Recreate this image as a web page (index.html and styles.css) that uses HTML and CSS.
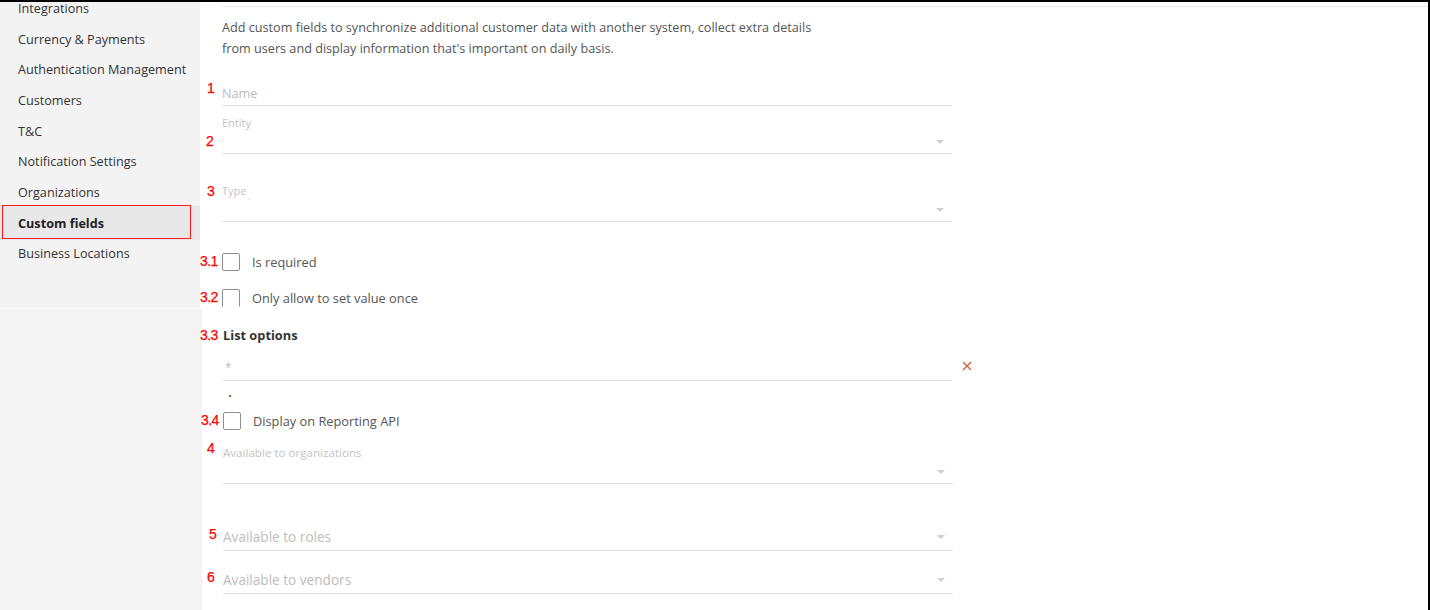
FILE: index.html
```html
<!DOCTYPE html>
<html lang="en">
<head>
<meta charset="utf-8">
<title>Custom fields</title>
<link rel="stylesheet" href="styles.css">
</head>
<body>
<div class="frame">
  <aside class="sidebar">
    <div class="side-top">
      <ul class="nav">
        <li class="nav-item">Integrations</li>
        <li class="nav-item">Currency &amp; Payments</li>
        <li class="nav-item">Authentication Management</li>
        <li class="nav-item">Customers</li>
        <li class="nav-item">T&amp;C</li>
        <li class="nav-item">Notification Settings</li>
        <li class="nav-item">Organizations</li>
        <li class="nav-item active">Custom fields</li>
        <li class="nav-item">Business Locations</li>
      </ul>
    </div>
    <div class="side-bottom"></div>
  </aside>

  <main class="main">
    <div class="rule"></div>
    <p class="desc">Add custom fields to synchronize additional customer data with another system, collect extra details<br>from users and display information that's important on daily basis.</p>

    <div class="field text-field name-field">
      <span class="num n1">1</span>
      <span class="placeholder">Name</span>
    </div>

    <div class="field select-field entity-field">
      <span class="num n2">2</span>
      <span class="label">Entity</span>
      <div class="value"><span class="tick"></span><span class="caret"></span></div>
    </div>

    <div class="field select-field type-field">
      <span class="num n3">3</span>
      <span class="label">Type</span>
      <div class="value"><span class="tick tick-type"></span><span class="caret"></span></div>
    </div>

    <label class="check-row req-row">
      <span class="num nsub">3.1</span>
      <span class="box"></span>
      <span class="check-label">Is required</span>
    </label>

    <label class="check-row once-row">
      <span class="num nsub">3.2</span>
      <span class="box box-cut"></span>
      <span class="check-label">Only allow to set value once</span>
    </label>

    <div class="lower">
      <h3 class="heading"><span class="num nsub nhead">3.3</span>List options</h3>

      <div class="option-row">
        <div class="field text-field option-field">
          <span class="placeholder star">*</span>
        </div>
        <svg class="remove" width="10" height="10" viewBox="0 0 10 10" aria-hidden="true">
          <path d="M1 1 L9 9 M9 1 L1 9" stroke="#c8643f" stroke-width="1.4" fill="none"/>
        </svg>
      </div>
      <div class="err"><span class="err-dot"></span></div>

      <label class="check-row api-row">
        <span class="num nsub">3.4</span>
        <span class="box"></span>
        <span class="check-label">Display on Reporting API</span>
      </label>

      <div class="field select-field orgs-field">
        <span class="num n4">4</span>
        <span class="label label-wide">Available to organizations</span>
        <div class="value"><span class="caret"></span></div>
      </div>

      <div class="field text-field drop roles-field">
        <span class="num n5">5</span>
        <span class="placeholder">Available to roles</span>
        <span class="caret"></span>
      </div>

      <div class="field text-field drop vendors-field">
        <span class="num n6">6</span>
        <span class="placeholder">Available to vendors</span>
        <span class="caret"></span>
      </div>
    </div>
  </main>
</div>
</body>
</html>
```

FILE: styles.css
```css
* { box-sizing: border-box; }

html, body {
  margin: 0;
  padding: 0;
  background: #ffffff;
}

body {
  font-family: "Open Sans", "Liberation Sans", sans-serif;
  font-size: 12.7px;
  color: #333;
}

.frame {
  display: flex;
  height: 610px;
  border-top: 2px solid #000;
  border-right: 2px solid #000;
  overflow: hidden;
}

/* ---------- sidebar ---------- */
.sidebar {
  width: 202px;
  flex: 0 0 202px;
  display: flex;
  flex-direction: column;
}

.side-top {
  width: 200px;
  height: 306px;
  background: #f3f3f3;
}

.side-bottom {
  flex: 1;
  width: 202px;
  background: #f4f4f4;
  border-top: 1px solid #ffffff;
}

.nav {
  list-style: none;
  margin: -9.2px 0 0 0;
  padding: 0;
}

.nav-item {
  position: relative;
  height: 30.7px;
  line-height: 30.7px;
  padding-left: 18px;
  font-size: 12.65px;
  color: #333;
  white-space: nowrap;
}

.nav-item.active {
  font-weight: 700;
  color: #222;
  z-index: 0;
}

.nav-item.active::before {
  content: "";
  position: absolute;
  left: 0;
  right: 0;
  top: -1.6px;
  bottom: -1.8px;
  background: #e8e8e8;
  z-index: -1;
}

.nav-item.active::after {
  content: "";
  position: absolute;
  left: 2px;
  right: 9px;
  top: -2.6px;
  bottom: -0.6px;
  border: 1.5px solid #ff1a1a;
}

/* ---------- main ---------- */
.main {
  flex: 1;
  padding-left: 20px;
  min-width: 0;
}

.rule {
  margin-top: 4px;
  border-top: 1px solid #ececec;
}

.desc {
  margin: 9.5px 0 0 0;
  font-size: 12.65px;
  line-height: 21px;
  color: #555;
}

.field {
  position: relative;
  width: 730px;
  border-bottom: 1px solid #e2e2e2;
}

.num {
  position: absolute;
  font-family: "Liberation Sans", Arial, sans-serif;
  font-size: 14px;
  line-height: 15px;
  letter-spacing: -0.6px;
  color: #ff0000;
  font-weight: 400;
  -webkit-text-stroke: 0.25px #ff0000;
}

.n1 { left: -15px; top: -2px; }
.n2 { left: -16px; top: 28px; }
.n3 { left: -15px; top: 10px; }
.n4 { left: -16px; top: 10.5px; }
.n5 { left: -14px; top: 0px; }
.n6 { left: -16px; top: 0px; }
.nsub { left: -22px; top: 0.5px; }
.nhead { left: -23px; top: 1.5px; }

.placeholder {
  display: block;
  line-height: 20px;
  color: #bdbdbd;
}

.text-field { padding-bottom: 2px; }

.name-field { margin-top: 24.5px; }

.select-field { padding-top: 10px; }

.label {
  display: block;
  font-size: 11px;
  line-height: 14px;
  color: #c4c4c4;
}

.label-wide { font-size: 11.6px; }

.value {
  position: relative;
  height: 23px;
}

.caret {
  position: absolute;
  right: 8px;
  top: 50%;
  margin-top: -2px;
  width: 0;
  height: 0;
  border-left: 4px solid transparent;
  border-right: 4px solid transparent;
  border-top: 4px solid #cfcfcf;
}

.tick {
  position: absolute;
  left: 0;
  top: 9px;
  width: 1px;
  height: 3px;
  background: #e6e6e6;
}

.tick-type {
  left: 26px;
  top: 1px;
  width: 2px;
  height: 1px;
}

.type-field { margin-top: 20px; }

/* ---------- checkboxes ---------- */
.check-row {
  position: relative;
  display: flex;
  align-items: center;
  height: 18px;
}

.box {
  width: 18px;
  height: 18px;
  border: 1px solid #8f8f8f;
  border-radius: 2px;
  background: #fff;
}

.box-cut {
  border-bottom-color: transparent;
  border-bottom-left-radius: 0;
  border-bottom-right-radius: 0;
}

.check-label {
  margin-left: 12px;
  font-size: 12.8px;
  line-height: 18px;
  color: #555;
}

.req-row { margin-top: 31px; }
.once-row { margin-top: 18px; }

/* ---------- lower section ---------- */
.lower { padding-left: 1px; }

.heading {
  position: relative;
  margin: 19px 0 0 0;
  font-size: 12.8px;
  font-weight: 700;
  line-height: 18px;
  color: #333;
}

.option-row {
  display: flex;
  align-items: flex-start;
  margin-top: 14px;
}

.option-field { width: 729px; }

.star {
  padding-left: 2px;
  font-size: 12px;
  color: #bbbbbb;
}

.remove {
  margin-left: 10px;
  margin-top: 3px;
  flex: none;
}

.err {
  height: 2px;
  margin-top: 14px;
}

.err-dot {
  display: block;
  width: 2px;
  height: 2px;
  margin-left: 6px;
  background: #b3502c;
}

.api-row { margin-top: 15px; }

.orgs-field { padding-top: 16px; }

.drop { padding-bottom: 3px; }

.drop .placeholder { font-size: 13.6px; }

.drop .caret { right: 8px; top: 10px; }

.roles-field { margin-top: 43px; }
.vendors-field { margin-top: 19px; }
```
